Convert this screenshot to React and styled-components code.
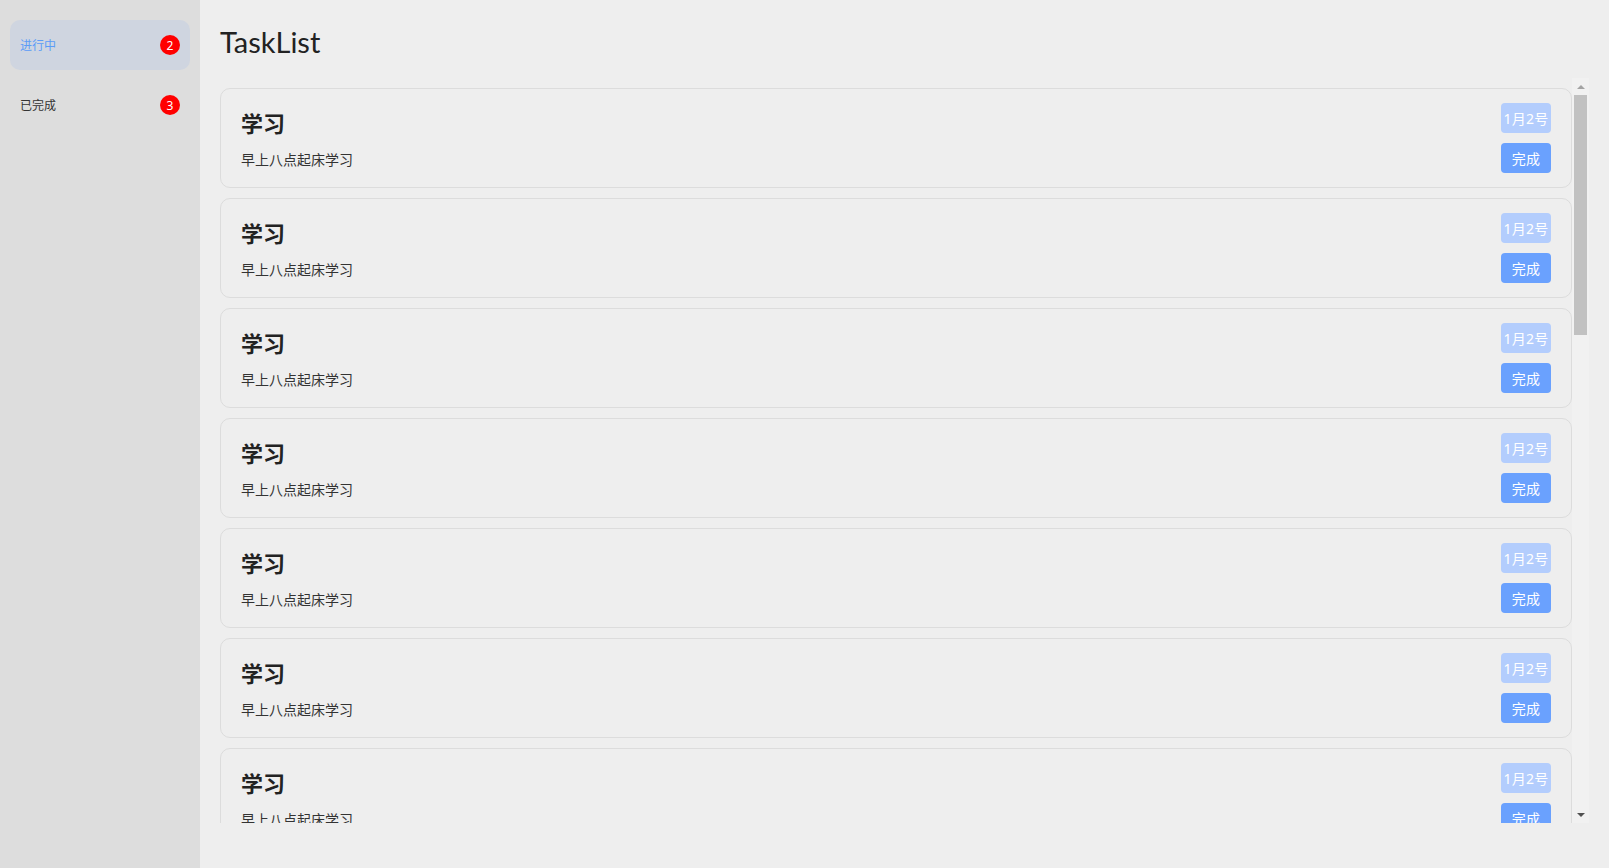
import styled, { createGlobalStyle } from 'styled-components';

const GlobalStyle = createGlobalStyle`
  * {
    box-sizing: border-box;
  }
  html, body {
    margin: 0;
    padding: 0;
    height: 100%;
    overflow: hidden;
    font-family: "Noto Sans", "Noto Sans CJK SC", sans-serif;
  }
`;

const LIST_HEIGHT = 745;
const CARD_STEP = 110;
const ARROW = 17;

const Layout = styled.div`
  display: flex;
  width: 100vw;
  height: 100vh;
  background: #eeeeee;
`;

const Sidebar = styled.aside`
  width: 200px;
  flex-shrink: 0;
  background: #dddddd;
  padding: 20px 10px;
  display: flex;
  flex-direction: column;
  gap: 10px;
`;

const NavItem = styled.div`
  height: 50px;
  padding: 0 10px;
  border-radius: 10px;
  display: flex;
  align-items: center;
  justify-content: space-between;
  font-size: 12px;
  color: ${({ $active }) => ($active ? '#5b9cf7' : '#333333')};
  background: ${({ $active }) => ($active ? '#cfd5e0' : 'transparent')};
  cursor: pointer;
`;

const Badge = styled.span`
  width: 20px;
  height: 20px;
  border-radius: 50%;
  background: #ff0000;
  color: #ffffff;
  font-size: 12px;
  display: flex;
  align-items: center;
  justify-content: center;
`;

const Main = styled.main`
  flex: 1;
  padding: 20px 20px 0;
  display: flex;
  flex-direction: column;
  min-width: 0;
`;

const Title = styled.h1`
  margin: 0 0 14px;
  font-family: Lato, "Noto Sans", sans-serif;
  font-size: 29px;
  line-height: 44px;
  font-weight: 400;
  color: #222222;
`;

const ListFrame = styled.div`
  height: ${LIST_HEIGHT}px;
  display: flex;
`;

const List = styled.div`
  flex: 1;
  min-width: 0;
  overflow-y: scroll;
  scrollbar-width: none;
  padding-top: 10px;
  display: flex;
  flex-direction: column;
  gap: 10px;

  &::-webkit-scrollbar {
    display: none;
  }
`;

const ScrollTrack = styled.div`
  width: 17px;
  flex-shrink: 0;
  background: #f1f1f1;
  display: flex;
  flex-direction: column;
`;

const ScrollArrow = styled.div`
  height: ${ARROW}px;
  display: flex;
  align-items: center;
  justify-content: center;
`;

const ScrollThumb = styled.div`
  margin: 0 2px;
  background: #c1c1c1;
`;

const ScrollRest = styled.div`
  flex: 1;
`;

const Card = styled.div`
  flex-shrink: 0;
  height: 100px;
  border: 1px solid #dcdcdc;
  border-radius: 10px;
  padding: 0 20px;
  display: flex;
  align-items: center;
  justify-content: space-between;
`;

const CardText = styled.div`
  padding-top: 1px;
  display: flex;
  flex-direction: column;
  gap: 12px;
`;

const CardTitle = styled.h3`
  margin: 0;
  font-size: 22px;
  line-height: 30px;
  font-weight: 700;
  color: #222222;
`;

const CardDesc = styled.p`
  margin: 0;
  font-size: 14px;
  line-height: 20px;
  color: #333333;
`;

const CardSide = styled.div`
  display: flex;
  flex-direction: column;
  gap: 10px;
`;

const Pill = styled.div`
  width: 50px;
  height: 30px;
  border: none;
  border-radius: 4px;
  display: flex;
  align-items: center;
  justify-content: center;
  font-family: inherit;
  font-size: 14px;
  letter-spacing: 0.3px;
  color: #ffffff;
  background: ${({ $done }) => ($done ? '#6aa1fe' : '#b3cdfd')};
  cursor: ${({ $done }) => ($done ? 'pointer' : 'default')};
`;

const tasks = Array.from({ length: 20 }, (_, i) => ({
  id: i,
  title: '学习',
  desc: '早上八点起床学习',
  date: '1月2号',
}));

export default function App() {
  const contentHeight = 10 + tasks.length * CARD_STEP;
  const trackHeight = LIST_HEIGHT - ARROW * 2;
  const thumbHeight = Math.round((trackHeight * LIST_HEIGHT) / contentHeight);

  return (
    <>
      <GlobalStyle />
      <Layout>
        <Sidebar>
          <NavItem $active>
            <span>进行中</span>
            <Badge>2</Badge>
          </NavItem>
          <NavItem>
            <span>已完成</span>
            <Badge>3</Badge>
          </NavItem>
        </Sidebar>
        <Main>
          <Title>TaskList</Title>
          <ListFrame>
            <List>
              {tasks.map((t) => (
                <Card key={t.id}>
                  <CardText>
                    <CardTitle>{t.title}</CardTitle>
                    <CardDesc>{t.desc}</CardDesc>
                  </CardText>
                  <CardSide>
                    <Pill>{t.date}</Pill>
                    <Pill as="button" $done>
                      完成
                    </Pill>
                  </CardSide>
                </Card>
              ))}
            </List>
            <ScrollTrack>
              <ScrollArrow>
                <svg width="8" height="4" viewBox="0 0 8 4">
                  <path d="M0 4h8L4 0z" fill="#a3a3a3" />
                </svg>
              </ScrollArrow>
              <ScrollThumb style={{ height: thumbHeight }} />
              <ScrollRest />
              <ScrollArrow>
                <svg width="8" height="4" viewBox="0 0 8 4">
                  <path d="M0 0h8L4 4z" fill="#505050" />
                </svg>
              </ScrollArrow>
            </ScrollTrack>
          </ListFrame>
        </Main>
      </Layout>
    </>
  );
}
